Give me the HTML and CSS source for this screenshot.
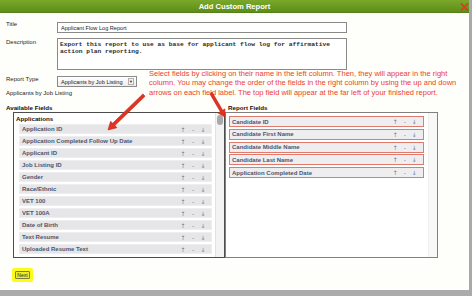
FILE: index.html
```html
<!DOCTYPE html>
<html lang="en">
  <head>
    <meta charset="UTF-8" />
    <title>Add Custom Report</title>
    <link rel="stylesheet" href="styles.css">
  </head>
  <body class="body">
    <div class="dialog">
      <div class="titlebar">
        <span></span>
        <h1 class="titlebar__title">Add Custom Report</h1>
        <svg class="titlebar__close" width="9" height="8" viewBox="0 0 9 8">
          <path d="M1 0.5 L8 7.5 M8 0.5 L1 7.5" stroke="#e3351f" stroke-width="1.6" />
        </svg>
      </div>

      <div class="content">
        <div class="row row_title">
          <label class="row__label" for="title">Title</label>
          <input class="row__input" id="title" type="text" value="Applicant Flow Log Report" />
        </div>
        <div class="row row_desc">
          <label class="row__label" for="desc">Description</label>
          <textarea class="row__area" id="desc">Export this report to use as base for applicant flow log for affirmative action plan reporting.</textarea>
        </div>

        <div class="type">
          <div class="type__left">
            <div class="row">
              <label class="row__label row__label_type" for="rtype">Report Type</label>
              <div class="select" id="rtype">
                <span>Applicants by Job Listing</span>
                <span class="select__btn">▾</span>
              </div>
            </div>
            <div class="type__name">Applicants by Job Listing</div>
          </div>
          <p class="hint">
            Select fields by clicking on their name in the left column. Then, they will appear in the right<br>
            column. You may change the order of the fields in the right column by using the up and down<br>
            arrows on each field label. The top field will appear at the far left of your finished report.
          </p>
        </div>

        <div class="columns">
          <div class="col col_left">
            <h2 class="col__title">Available Fields</h2>
            <div class="box box_left">
              <div class="box__list">
                <h3 class="box__group">Applications</h3>
                <ul class="fields" id="available"></ul>
              </div>
              <div class="scroll"><div class="scroll__thumb"></div></div>
            </div>
          </div>
          <div class="col col_right">
            <h2 class="col__title">Report Fields</h2>
            <div class="box box_right">
              <div class="box__list">
                <ul class="fields fields_picked" id="picked"></ul>
              </div>
              <div class="scroll scroll_empty"></div>
            </div>
          </div>
        </div>

        <div class="next">
          <button class="next__btn" type="button">Next</button>
        </div>
      </div>
    </div>

    <svg class="arrows" width="474" height="296" viewBox="0 0 474 296">
      <polygon points="145.1,96.2 114.9,125.6 116.9,127.7 108,130 110.6,121.2 112.6,123.3 142.9,93.9"
        fill="#e3321f" stroke="#b8281a" stroke-width="0.6" />
      <polygon points="212.2,92.3 222.7,110.2 224.9,108.9 225,117 218,113 220.3,111.7 209.8,93.7"
        fill="#e3321f" stroke="#b8281a" stroke-width="0.6" />
    </svg>

    <script>
      const available = [
        "Application ID",
        "Application Completed Follow Up Date",
        "Applicant ID",
        "Job Listing ID",
        "Gender",
        "Race/Ethnic",
        "VET 100",
        "VET 100A",
        "Date of Birth",
        "Text Resume",
        "Uploaded Resume Text",
      ];
      const picked = [
        "Candidate ID",
        "Candidate First Name",
        "Candidate Middle Name",
        "Candidate Last Name",
        "Application Completed Date",
      ];

      function drawFields(listId, names) {
        const list = document.getElementById(listId);
        for (let name of names) {
          let item = document.createElement("li");
          item.classList.add("field");
          item.innerHTML = `<span class="field__name">${name}</span><span class="field__arrows"><span>↑</span><span>-</span><span>↓</span></span>`;
          list.append(item);
        }
      }

      drawFields("available", available);
      drawFields("picked", picked);
    </script>
  </body>
</html>
```

FILE: styles.css
```css
.body {
  margin: 0;
  background-color: #ffffff;
  font-family: "Liberation Sans", Arial, sans-serif;
  position: relative;
}
.dialog {
  width: 469px;
  height: 290px;
  background-color: #fefefb;
  border-right: 3px solid #a9a9a9;
  border-bottom: 6px solid #ababab;
  display: flex;
  flex-direction: column;
}
.titlebar {
  height: 13px;
  display: grid;
  grid-template-columns: 1fr auto 1fr;
  align-items: center;
  background: linear-gradient(#79a82a, #5f8e18);
  border-bottom: 1px solid #55801a;
  box-sizing: border-box;
}
.titlebar__title {
  margin: 0;
  color: #ffffff;
  font-size: 7.6px;
  font-weight: bold;
  line-height: 13px;
}
.titlebar__close {
  justify-self: end;
  margin-right: 0;
}
.content {
  padding: 8px 0 0 6px;
  color: #222222;
}
.row {
  display: flex;
  align-items: flex-start;
}
.row__label {
  width: 51px;
  font-size: 6px;
  line-height: 8px;
  color: #1e1e1e;
}
.row_title .row__label {
  margin-top: -1px;
}
.row__input {
  margin: 1px 0 0 0;
  width: 290px;
  height: 11px;
  box-sizing: border-box;
  border: 1px solid #8a8a8a;
  padding: 0 3px;
  font-family: "Liberation Sans", Arial, sans-serif;
  font-size: 5.6px;
  color: #222222;
  background: #ffffff;
}
.row_desc {
  margin-top: 5px;
}
.row__area {
  margin: 0;
  width: 290px;
  height: 32px;
  box-sizing: border-box;
  border: 1px solid #8a8a8a;
  padding: 2px 2px;
  font-family: "Liberation Mono", "Courier New", monospace;
  font-size: 6.25px;
  line-height: 7px;
  font-weight: bold;
  color: #2a2a2a;
  resize: none;
  background: #ffffff;
}
.type {
  display: flex;
  align-items: flex-start;
}
.type__left {
  width: 143px;
  flex-shrink: 0;
  padding-top: 5px;
}
.row__label_type {
  margin-top: 0;
}
.select {
  margin-top: 1px;
  width: 80px;
  height: 11px;
  box-sizing: border-box;
  border: 1px solid #8a8a8a;
  background: linear-gradient(#ffffff, #ededed);
  display: flex;
  align-items: center;
  justify-content: space-between;
  padding: 0 2px 0 3px;
  font-size: 5.6px;
  color: #222222;
}
.select__btn {
  font-family: "DejaVu Sans", sans-serif;
  font-size: 4.5px;
  border: 1px solid #b0b0b0;
  background: #f4f4f4;
  line-height: 5px;
  padding: 0 1px;
}
.type__name {
  margin-top: 2px;
  font-size: 6px;
  line-height: 8px;
  color: #1e1e1e;
}
.hint {
  margin: -1px 0 0 0;
  font-size: 7.5px;
  line-height: 9.3px;
  color: #ec3f30;
  white-space: nowrap;
}
.columns {
  display: flex;
  margin-top: 7px;
}
.col_left {
  width: 219px;
}
.col_right {
  width: 213px;
}
.col__title {
  margin: 0;
  height: 8px;
  font-size: 6.2px;
  line-height: 8px;
  font-weight: bold;
  color: #111111;
}
.col_right .col__title {
  padding-left: 3px;
}
.box {
  height: 146px;
  box-sizing: border-box;
  display: flex;
  background: #ffffff;
}
.box_left {
  margin-left: 7px;
  width: 212px;
  border: 1px solid #4d4d4d;
}
.box_right {
  width: 213px;
  border: 1px solid #808080;
}
.box__list {
  flex: 1;
  overflow: hidden;
}
.box_left .box__list {
  padding: 1px 3px 0 2px;
}
.box_right .box__list {
  padding: 3px 4px 0 3px;
}
.box__group {
  margin: 0;
  height: 10px;
  font-size: 6.2px;
  line-height: 10px;
  font-weight: bold;
  color: #111111;
}
.fields {
  list-style: none;
  margin: 0 0 0 3px;
  padding: 0;
  display: flex;
  flex-direction: column;
  gap: 2px;
}
.fields_picked {
  margin: 0;
  gap: 1.75px;
}
.field {
  height: 10px;
  box-sizing: border-box;
  display: flex;
  align-items: center;
  justify-content: space-between;
  background: #e6e6e9;
  border: 1px solid #eeeef0;
  padding: 0 3px 0 2px;
  color: #4a5670;
  font-size: 6px;
  font-weight: bold;
}
.fields_picked .field {
  height: 11px;
  border-color: #e07a6c;
  background: #eeeef1;
  padding: 0 4px 0 2px;
}
.field__arrows {
  display: flex;
  font-family: "DejaVu Sans", sans-serif;
  font-weight: normal;
  font-size: 6px;
  color: #6c7890;
}
.field__arrows span {
  width: 10px;
  text-align: center;
}
.fields_picked .field__arrows span {
  width: 9.5px;
}
.scroll {
  width: 8px;
  background: #f3f3f3;
  border-left: 1px solid #e2e2e2;
  padding-top: 2px;
}
.scroll_empty {
  background: #f8f8f8;
  border-left: 1px solid #efefef;
}
.scroll__thumb {
  height: 10px;
  margin: 0 1px;
  border-radius: 3px;
  background: #a9a9a9;
}
.next {
  margin: 10px 0 0 6px;
  width: 21px;
  height: 14px;
  background: #fbfb1c;
  border-radius: 2px;
  display: flex;
  align-items: center;
  justify-content: center;
}
.next__btn {
  margin: 0;
  padding: 0 1px;
  height: 8px;
  border: 1px solid #7a7a40;
  border-radius: 1px;
  background: #eeee30;
  font-family: "Liberation Sans", Arial, sans-serif;
  font-size: 5px;
  line-height: 6px;
  color: #222222;
}
.arrows {
  position: absolute;
  top: 0;
  left: 0;
  pointer-events: none;
}
```
